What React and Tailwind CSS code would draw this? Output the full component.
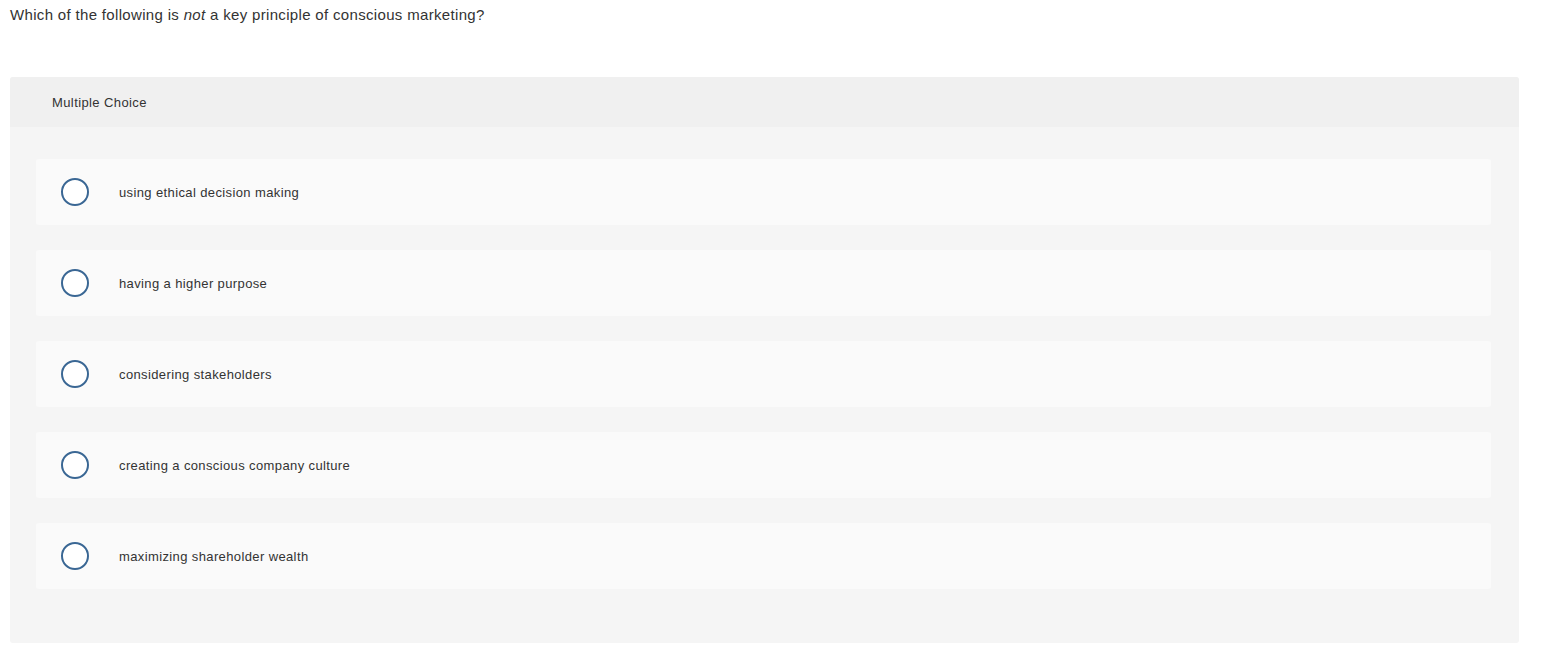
import React from 'react';

const choices = [
  'using ethical decision making',
  'having a higher purpose',
  'considering stakeholders',
  'creating a conscious company culture',
  'maximizing shareholder wealth',
];

function Choice({ label }) {
  return (
    <label className="flex items-center h-[66px] pl-[25px] bg-[#fafafa] rounded-[3px] cursor-pointer">
      <span className="w-[28px] h-[28px] rounded-full border-2 border-[#3a6794] bg-white shrink-0" />
      <span className="ml-[30px] pt-[2px] text-[13px] tracking-[0.38px] text-[#333]">{label}</span>
    </label>
  );
}

export default function App() {
  return (
    <div className="bg-white min-h-screen font-['Liberation_Sans',Arial,sans-serif] text-[#333]">
      {/* Question */}
      <p className="pl-[10px] pt-[5px] text-[15px] leading-[20px] tracking-[0.33px]">
        Which of the following is <em>not</em> a key principle of conscious marketing?
      </p>

      {/* Answer panel */}
      <div className="ml-[10px] mt-[52px] w-[1509px] bg-[#f5f5f5] rounded-[3px] overflow-hidden">
        <div className="h-[50px] bg-[#f0f0f0] flex items-center pl-[42px] pt-[2px] text-[13px] tracking-[0.4px]">
          Multiple Choice
        </div>
        <div className="pl-[26px] pr-[28px] pt-[32px] pb-[54px] flex flex-col gap-[25px]">
          {choices.map((c) => (
            <Choice key={c} label={c} />
          ))}
        </div>
      </div>
    </div>
  );
}
